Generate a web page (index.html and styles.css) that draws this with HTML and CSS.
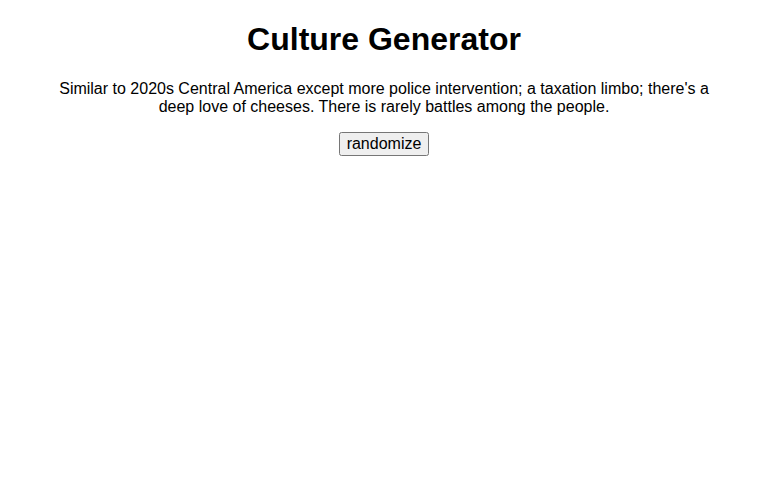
FILE: index.html
```html
<!DOCTYPE html>
<html>
<head>
<title>Culture Generator</title>
<link rel="stylesheet" href="styles.css">
</head>
<body>
    <div class="container">
        <h1>Culture Generator</h1>
        <p id="culture">Similar to 2020s Central America except more police intervention; a taxation limbo; there's a deep love of cheeses. There is rarely battles among the people.</p>
        <button type="button" class="btn">randomize</button>
    </div>
</body>
</html>
```

FILE: styles.css
```css
body {
    margin: 0;
    font-family: "Liberation Sans", Arial, sans-serif;
    text-align: center;
    color: #000;
    background-color: #fff;
}

.container {
    max-width: 660px;
    margin: 0 auto;
}

.btn {
    font-family: "Liberation Sans", Arial, sans-serif;
    font-size: 16px;
}
```
